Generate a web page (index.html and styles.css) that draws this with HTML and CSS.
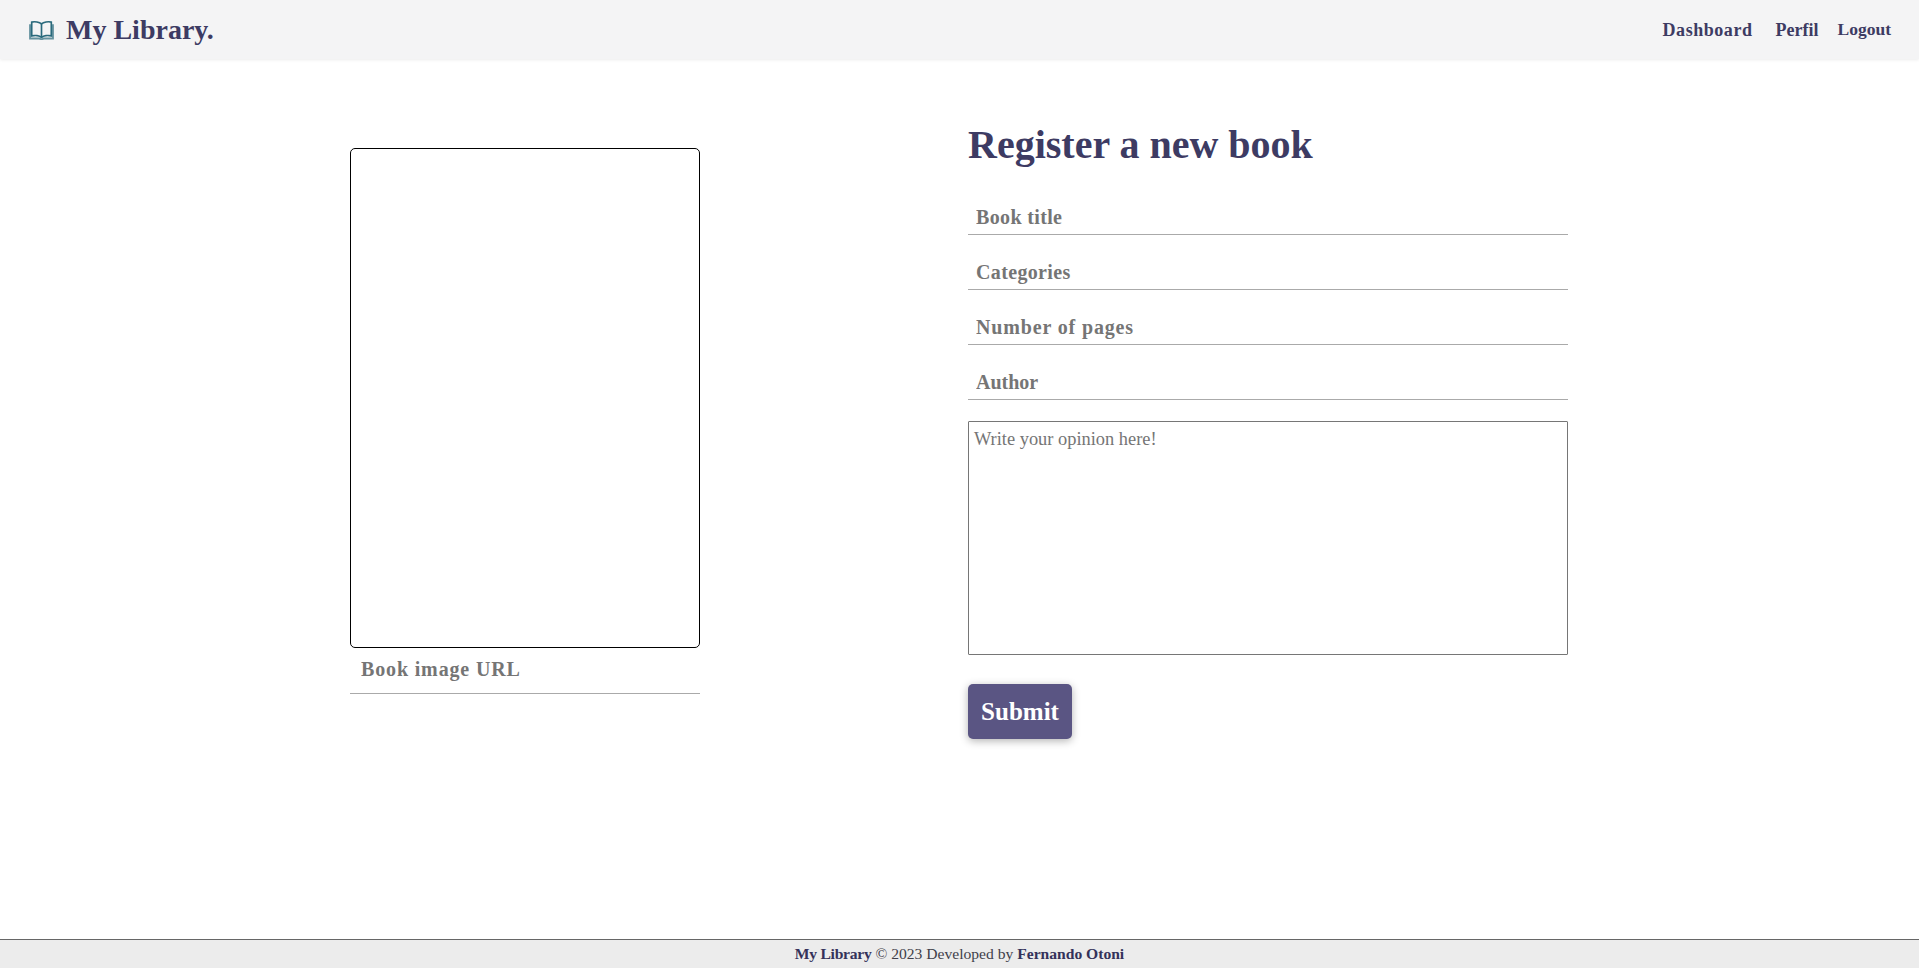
FILE: index.html
```html
<!DOCTYPE html>
<html lang="en">
<head>
<meta charset="utf-8">
<title>My Library</title>
<link rel="stylesheet" href="styles.css">
</head>
<body>
<header class="topbar">
  <a class="brand" href="#">
    <svg class="brand-icon" viewBox="0 0 24 20" aria-hidden="true">
      <path class="page" d="M12 4.2C10 2.4 5.5 1.6 2.6 2.4V15.6C5.5 14.9 10 15.4 12 17C14 15.4 18.5 14.9 21.4 15.6V2.4C18.5 1.6 14 2.4 12 4.2Z"/>
      <path class="page" d="M12 4.2V17"/>
      <path class="spine" d="M1 4.5V18.2H9.5C10.5 18.2 11 18.8 12 18.8C13 18.8 13.5 18.2 14.5 18.2H23V4.5"/>
    </svg>
    <span>My Library.</span>
  </a>
  <nav class="nav">
    <a class="nav-link nav-wide" href="#">Dashboard</a>
    <a class="nav-link" href="#">Perfil</a>
    <a class="nav-link nav-logout" href="#">Logout</a>
  </nav>
</header>
<main class="content">
  <form class="book-form">
    <section class="cover-col">
      <div class="cover"></div>
      <input class="field field-url field-wide" type="text" placeholder="Book image URL">
    </section>
    <section class="details-col">
      <h1 class="title">Register a new book</h1>
      <input class="field" type="text" placeholder="Book title">
      <input class="field" type="text" placeholder="Categories">
      <input class="field field-wide" type="text" placeholder="Number of pages">
      <input class="field field-tight" type="text" placeholder="Author">
      <textarea class="opinion" placeholder="Write your opinion here!"></textarea>
      <button class="submit" type="button">Submit</button>
    </section>
  </form>
</main>
<footer class="footer">
  <p><b class="footer-brand">My Library</b> © 2023 Developed by <b>Fernando Otoni</b></p>
</footer>
</body>
</html>
```
FILE: styles.css
```css
* { box-sizing: border-box; }
html, body { height: 100%; }
body {
  margin: 0;
  min-height: 100vh;
  display: flex;
  flex-direction: column;
  background: #fff;
  font-family: "Liberation Serif", "Times New Roman", serif;
  color: #3d3b63;
}
a { color: inherit; text-decoration: none; }

.topbar {
  height: 59px;
  flex: none;
  display: flex;
  align-items: center;
  justify-content: space-between;
  padding: 0 28px 0 29px;
  background: #f4f4f5;
  box-shadow: 0 1px 3px rgba(0, 0, 0, 0.08);
}
.brand {
  display: flex;
  align-items: center;
  gap: 12px;
  font-size: 28px;
  font-weight: 700;
}
.brand-icon { width: 25px; height: 22px; display: block; }
.page { fill: none; stroke: #2a6a7c; stroke-width: 1.6; }
.spine { fill: none; stroke: #2a6a7c; stroke-width: 1.8; opacity: .7; }
.nav {
  display: flex;
  align-items: center;
  gap: 23px;
  padding-top: 2px;
  font-size: 18px;
  font-weight: 700;
}
.nav-wide { letter-spacing: .55px; }
.nav-logout { margin-left: -4px; font-size: 17.5px; position: relative; top: -1px; }

.content { flex: 1; }
.book-form {
  display: flex;
  justify-content: center;
  gap: 268px;
  padding: 63px 1px 0 0;
}
.cover-col { width: 350px; padding-top: 26px; }
.cover {
  height: 500px;
  border: 1px solid #000;
  border-radius: 5px;
  background: #fff;
}
.details-col { width: 600px; display: flex; flex-direction: column; align-items: flex-start; }
.title {
  margin: 0 0 27px;
  font-size: 40px;
  line-height: 46px;
  font-weight: 700;
  color: #3d3b63;
}
.field {
  display: block;
  width: 100%;
  height: 40px;
  margin-bottom: 15px;
  padding: 5px 8px 0;
  border: 0;
  border-bottom: 1px solid #aaa;
  background: transparent;
  font-family: inherit;
  font-size: 20px;
  font-weight: 700;
  letter-spacing: .35px;
  outline: none;
}
.field::placeholder { color: #757575; opacity: 1; }
.field-wide { letter-spacing: .85px; }
.field-tight { letter-spacing: 0; padding-top: 6px; }
.field-url { height: 46px; margin: 0; padding: 0 11px 2px; }
.opinion {
  display: block;
  width: 100%;
  height: 234px;
  margin: 6px 0 0;
  padding: 7px 5px 5px;
  border: 1px solid #767676;
  border-radius: 1px;
  font-family: inherit;
  font-size: 18.4px;
  resize: none;
  outline: none;
}
.opinion::placeholder { color: #757575; opacity: 1; }
.submit {
  width: 104px;
  height: 55px;
  margin-top: 29px;
  padding: 0;
  border: 0;
  border-radius: 5px;
  background: #5a5583;
  color: #fff;
  font-family: inherit;
  font-size: 25px;
  font-weight: 700;
  box-shadow: 0 2px 8px rgba(0, 0, 0, 0.3);
}

.footer {
  height: 29px;
  flex: none;
  display: flex;
  align-items: center;
  justify-content: center;
  border-top: 1px solid #666;
  background: #ececec;
  font-size: 15.6px;
  color: #3f3f4a;
}
.footer p { margin: 0; }
.footer b { color: #34325a; }
.footer-brand { letter-spacing: -.25px; }
```
